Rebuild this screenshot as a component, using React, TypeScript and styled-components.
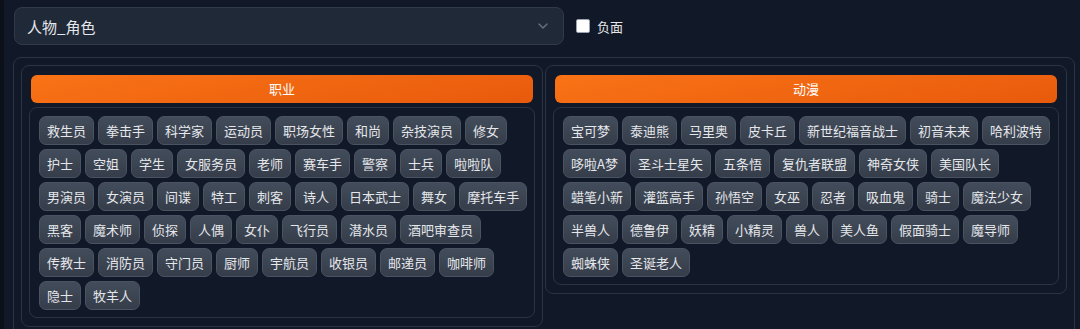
import React from "react";
import styled, { createGlobalStyle } from "styled-components";
import { ChevronDown } from "lucide-react";

const GlobalStyle = createGlobalStyle`
  html, body {
    margin: 0;
    padding: 0;
    background: #111827;
    font-family: "Noto Sans CJK SC", "Noto Sans", "Liberation Sans", sans-serif;
  }
  * { box-sizing: border-box; }
`;

const Page = styled.div`
  min-height: 100vh;
  background: #111827;
  border-left: 4px solid #0c1019;
  padding: 7px 5px 0 9px;
  color: #e5e7eb;
`;

const TopRow = styled.div`
  display: flex;
  align-items: center;
  gap: 12px;
  padding-left: 1px;
`;

const Select = styled.div`
  width: 550px;
  height: 38px;
  display: flex;
  align-items: center;
  justify-content: space-between;
  padding: 0 12px;
  background: #1f2937;
  border: 1px solid #2f3a4a;
  border-radius: 8px;
  font-size: 15px;
  color: #e5e7eb;
`;

const SelectValue = styled.span`
  padding-left: 0;
`;

const CheckLabel = styled.label`
  display: flex;
  align-items: center;
  gap: 7px;
  font-size: 13px;
  color: #e5e7eb;
`;

const Box = styled.span`
  width: 14px;
  height: 14px;
  background: #ffffff;
  border: 1px solid #9ca3af;
  border-radius: 2px;
`;

const Outer = styled.div`
  margin-top: 12px;
  border: 1px solid #2b3443;
  border-radius: 8px;
  padding: 7px 7px 12px;
  display: grid;
  grid-template-columns: 1fr 1fr;
  gap: 2px;
  align-items: start;
`;

const Card = styled.section`
  border: 1px solid #2b3443;
  border-radius: 8px;
  padding: 9px 7px 8px;
`;

const Header = styled.div`
  margin: 0 2px;
  height: 28px;
  line-height: 28px;
  text-align: center;
  font-size: 13px;
  color: #ffffff;
  border-radius: 6px;
  background: linear-gradient(170deg, #f97316, #e85a0c);
`;

const TagBox = styled.div`
  margin-top: 4px;
  border: 1px solid #2b3443;
  border-radius: 8px;
  padding: 8px 4px 7px 9px;
  display: flex;
  flex-wrap: wrap;
  gap: 4px;
`;

const Tag = styled.span`
  height: 29px;
  padding: 0 7px;
  display: inline-flex;
  align-items: center;
  font-size: 13px;
  color: #e5e7eb;
  white-space: nowrap;
  border: 1px solid #4a5362;
  border-radius: 7px;
  background: linear-gradient(180deg, #434c5a, #353d4a);
`;

const groups = [
  {
    title: "职业",
    tags: [
      "救生员", "拳击手", "科学家", "运动员", "职场女性", "和尚", "杂技演员", "修女",
      "护士", "空姐", "学生", "女服务员", "老师", "赛车手", "警察", "士兵", "啦啦队",
      "男演员", "女演员", "间谍", "特工", "刺客", "诗人", "日本武士", "舞女", "摩托车手",
      "黑客", "魔术师", "侦探", "人偶", "女仆", "飞行员", "潜水员", "酒吧审查员",
      "传教士", "消防员", "守门员", "厨师", "宇航员", "收银员", "邮递员", "咖啡师",
      "隐士", "牧羊人",
    ],
  },
  {
    title: "动漫",
    tags: [
      "宝可梦", "泰迪熊", "马里奥", "皮卡丘", "新世纪福音战士", "初音未来", "哈利波特",
      "哆啦A梦", "圣斗士星矢", "五条悟", "复仇者联盟", "神奇女侠", "美国队长",
      "蜡笔小新", "灌篮高手", "孙悟空", "女巫", "忍者", "吸血鬼", "骑士", "魔法少女",
      "半兽人", "德鲁伊", "妖精", "小精灵", "兽人", "美人鱼", "假面骑士", "魔导师",
      "蜘蛛侠", "圣诞老人",
    ],
  },
];

export default function App() {
  return (
    <>
      <GlobalStyle />
      <Page>
        <TopRow>
          <Select>
            <SelectValue>人物_角色</SelectValue>
            <ChevronDown size={16} color="#6b7280" strokeWidth={2} />
          </Select>
          <CheckLabel>
            <Box />
            负面
          </CheckLabel>
        </TopRow>
        <Outer>
          {groups.map((g) => (
            <Card key={g.title}>
              <Header>{g.title}</Header>
              <TagBox>
                {g.tags.map((t) => (
                  <Tag key={t}>{t}</Tag>
                ))}
              </TagBox>
            </Card>
          ))}
        </Outer>
      </Page>
    </>
  );
}
